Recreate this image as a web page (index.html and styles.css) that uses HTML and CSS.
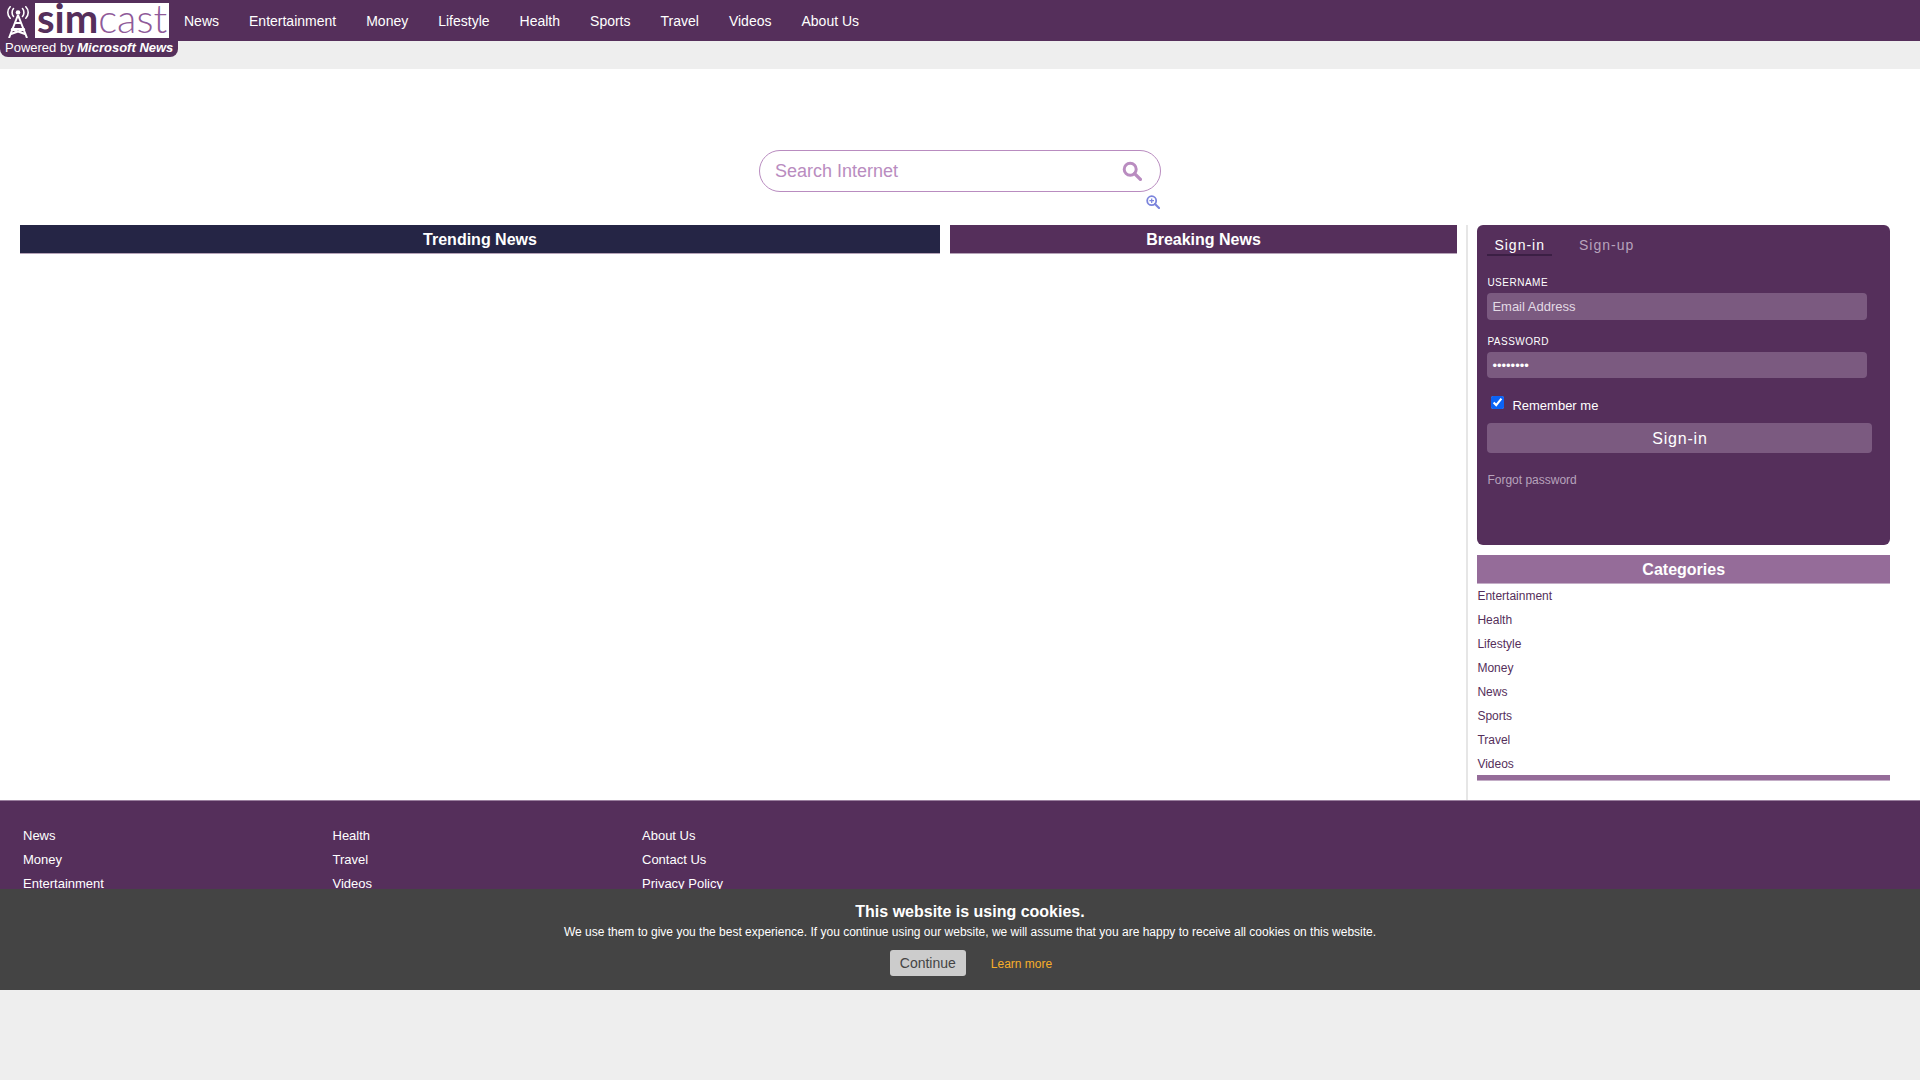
FILE: index.html
```html
<!DOCTYPE html>
<html lang="en">
<head>
    <meta charset="UTF-8">
    <meta name="viewport" content="width=device-width, initial-scale=1.0">
    <title>Simcast</title>
    <link rel="stylesheet" href="styles.css">
</head>
<body>
    <header class="topbar">
        <div class="logo">
            <div class="logo-main">
                <svg class="tower" viewBox="0 0 24 32" width="24" height="32">
                    <g fill="none" stroke="#fff" stroke-width="1.6" stroke-linecap="round">
                        <path d="M7.5 2.5C5.6 4.6 5.6 8.4 7.5 10.5"/>
                        <path d="M4.2 .8C1 4 1 9 4.2 12.2"/>
                        <path d="M16.5 2.5C18.4 4.6 18.4 8.4 16.5 10.5"/>
                        <path d="M19.8 .8C23 4 23 9 19.8 12.2"/>
                    </g>
                    <circle cx="12" cy="6.5" r="2.3" fill="#fff"/>
                    <path d="M12 9L3 32M12 9L21 32M9 17H15M6.8 23H17.2M5 28L19 23M19 28L5 23" fill="none" stroke="#fff" stroke-width="2"/>
                </svg>
                <div class="logo-box"><span class="logo-sim">sim</span><span class="logo-cast">cast</span></div>
            </div>
            <div class="logo-sub">Powered by <b>Microsoft News</b></div>
        </div>
        <nav class="nav">
            <a href="#">News</a>
            <a href="#">Entertainment</a>
            <a href="#">Money</a>
            <a href="#">Lifestyle</a>
            <a href="#">Health</a>
            <a href="#">Sports</a>
            <a href="#">Travel</a>
            <a href="#">Videos</a>
            <a href="#">About Us</a>
        </nav>
    </header>
    <div class="strip"></div>

    <main class="main">
        <div class="search-area">
            <div class="search">
                <input type="text" placeholder="Search Internet">
                <svg viewBox="0 0 20 20" width="20" height="20">
                    <circle cx="8.2" cy="8.2" r="6" fill="none" stroke="#b98cc0" stroke-width="3"/>
                    <path d="M12.6 12.6L18.4 18.4" stroke="#b98cc0" stroke-width="3.4" stroke-linecap="round"/>
                </svg>
            </div>
            <div class="search-zoom">
                <svg viewBox="0 0 14 14" width="14" height="14">
                    <circle cx="5.7" cy="5.7" r="4.5" fill="none" stroke="#7b84dc" stroke-width="1.8"/>
                    <path d="M9 9L13 13" stroke="#7b84dc" stroke-width="2.2" stroke-linecap="round"/>
                    <path d="M3.4 5.7H8M5.7 3.4V8" stroke="#7b84dc" stroke-width="1.2"/>
                </svg>
            </div>
        </div>

        <div class="columns">
            <section class="col-trending"><h2 class="title title-dark">Trending News</h2></section>
            <section class="col-breaking"><h2 class="title">Breaking News</h2></section>
            <aside class="sidebar">
                <div class="login">
                    <div class="tabs">
                        <a href="#" class="tab active">Sign-in</a>
                        <a href="#" class="tab">Sign-up</a>
                    </div>
                    <label class="field-label">USERNAME</label>
                    <input class="field" type="text" placeholder="Email Address">
                    <label class="field-label label-pass">PASSWORD</label>
                    <input class="field field-pass" type="password" value="password">
                    <label class="remember"><input type="checkbox" checked><span>Remember me</span></label>
                    <button class="signin">Sign-in</button>
                    <a href="#" class="forgot">Forgot password</a>
                </div>
                <h2 class="title title-light">Categories</h2>
                <ul class="cats">
                    <li><a href="#">Entertainment</a></li>
                    <li><a href="#">Health</a></li>
                    <li><a href="#">Lifestyle</a></li>
                    <li><a href="#">Money</a></li>
                    <li><a href="#">News</a></li>
                    <li><a href="#">Sports</a></li>
                    <li><a href="#">Travel</a></li>
                    <li><a href="#">Videos</a></li>
                </ul>
                <div class="cats-end"></div>
            </aside>
        </div>
    </main>

    <footer class="footer">
        <ul>
            <li><a href="#">News</a></li>
            <li><a href="#">Money</a></li>
            <li><a href="#">Entertainment</a></li>
        </ul>
        <ul>
            <li><a href="#">Health</a></li>
            <li><a href="#">Travel</a></li>
            <li><a href="#">Videos</a></li>
        </ul>
        <ul>
            <li><a href="#">About Us</a></li>
            <li><a href="#">Contact Us</a></li>
            <li><a href="#">Privacy Policy</a></li>
        </ul>
    </footer>

    <div class="cookie">
        <h3>This website is using cookies.</h3>
        <p>We use them to give you the best experience. If you continue using our website, we will assume that you are happy to receive all cookies on this website.</p>
        <div class="cookie-actions">
            <button>Continue</button>
            <a href="#">Learn more</a>
        </div>
    </div>
</body>
</html>
```

FILE: styles.css
```css
* {
    box-sizing: border-box;
}

body {
    font-family: "Liberation Sans", Arial, sans-serif;
    margin: 0;
    background-color: #eee;
}

a {
    text-decoration: none;
}

ul {
    list-style: none;
    margin: 0;
    padding: 0;
}

.topbar {
    display: flex;
    align-items: flex-start;
    height: 41px;
    background-color: #552f5b;
}

.logo {
    width: 178px;
    height: 57px;
    flex-shrink: 0;
    background-color: #552f5b;
    border-radius: 0 0 8px 8px;
}

.logo-main {
    display: flex;
    align-items: flex-end;
    height: 40px;
    padding: 3px 0 2px 6px;
}

.tower {
    flex-shrink: 0;
    margin-right: 5px;
}

.logo-box {
    width: 134px;
    height: 35px;
    background-color: #fff;
    font-family: Lato, sans-serif;
    font-size: 40px;
    line-height: 31px;
    padding-left: 2px;
    white-space: nowrap;
    overflow: hidden;
}

.logo-sim {
    color: #552f5b;
    font-weight: 700;
}

.logo-cast {
    color: #8f5a99;
    font-weight: 300;
}

.logo-sub {
    color: #fff;
    font-size: 13px;
    line-height: 15px;
    padding-left: 5px;
    white-space: nowrap;
}

.logo-sub b {
    font-style: italic;
}

.nav {
    display: flex;
    gap: 30px;
    margin-left: 6px;
    line-height: 42px;
}

.nav a {
    color: #fff;
    font-size: 14px;
}

.strip {
    height: 28px;
}

.main {
    height: 731px;
    padding: 81px 30px 0 20px;
    background-color: #fff;
}

.search-area {
    width: 402px;
    height: 75px;
    margin-left: 739px;
}

.search {
    display: flex;
    align-items: center;
    height: 42px;
    padding: 0 18px 0 15px;
    border: 1px solid #b98cc0;
    border-radius: 21px;
}

.search input {
    flex: 1;
    min-width: 0;
    border: none;
    outline: none;
    padding: 1px 0 0;
    font-family: inherit;
    font-size: 18px;
}

.search input::placeholder {
    color: #b98cc0;
    opacity: 1;
}

.search-zoom {
    display: flex;
    justify-content: flex-end;
    padding: 3px 1px 0 0;
}

.columns {
    display: flex;
    height: 575px;
}

.col-trending {
    width: 920px;
    margin-right: 10px;
}

.col-breaking {
    width: 507px;
    margin-right: 9px;
}

.title {
    margin: 0;
    height: 29px;
    line-height: 30px;
    font-size: 16px;
    text-align: center;
    color: #fff;
    background-color: #552f5b;
    border-bottom: 1px solid #b5a3b8;
}

.title-dark {
    background-color: #252545;
}

.title-light {
    background-color: #956c99;
    border-bottom-color: #c4aec7;
}

.sidebar {
    width: 424px;
    padding-left: 9.4px;
    border-left: 2px solid #e6e6e6;
}

.login {
    height: 320px;
    margin-bottom: 10px;
    padding: 10px;
    background-color: #552f5b;
    border-radius: 6px;
}

.tabs {
    display: flex;
    gap: 20px;
    height: 21px;
    margin-bottom: 21px;
}

.tab {
    padding: 0 7px;
    height: 21px;
    color: #b7a3bb;
    font-size: 14px;
    line-height: 20px;
    letter-spacing: 1px;
}

.tab.active {
    color: #fff;
    border-bottom: 2px solid #3b1f44;
}

.field-label {
    display: block;
    color: #fff;
    font-size: 10px;
    line-height: 12px;
    letter-spacing: 0.5px;
    margin-bottom: 4px;
}

.label-pass {
    margin-top: 16px;
}

.field {
    display: block;
    width: 380px;
    height: 27px;
    padding: 0 5px;
    border: none;
    outline: none;
    border-radius: 4px;
    background-color: #7b5a80;
    color: #fff;
    font-family: inherit;
    font-size: 13px;
}

.field::placeholder {
    color: #e3dbe5;
    opacity: 1;
}

.field-pass {
    height: 26px;
}

.remember {
    display: flex;
    align-items: center;
    height: 18px;
    margin-top: 17px;
    color: #fff;
    font-size: 13px;
}

.remember input {
    width: 13px;
    height: 13px;
    margin: 1px 8px 4px 4px;
    accent-color: #0b63f6;
}

.remember span {
    padding-top: 2px;
}

.signin {
    display: block;
    width: 385px;
    height: 30px;
    margin-top: 10px;
    padding: 1px 0 0;
    border: none;
    border-radius: 4px;
    background-color: #7b5a80;
    color: #fff;
    font-family: inherit;
    font-size: 16px;
    letter-spacing: 0.8px;
}

.forgot {
    display: block;
    margin-top: 20px;
    color: #b7a3bb;
    font-size: 12px;
}

.cats {
    margin-bottom: -1px;
}

.cats li {
    height: 24px;
    line-height: 24px;
    font-size: 12px;
}

.cats a {
    color: #552f5b;
}

.cats-end {
    position: relative;
    height: 6px;
    background-color: #956c99;
    border-bottom: 1px solid #c4aec7;
}

.footer {
    display: flex;
    height: 190px;
    padding: 23px 0 0 23px;
    background-color: #552f5b;
    border-top: 1px solid #9a7f9e;
}

.footer ul {
    width: 309.5px;
}

.footer li {
    height: 24px;
    line-height: 24px;
    font-size: 13px;
}

.footer a {
    color: #fff;
}

.cookie {
    position: fixed;
    left: 0;
    right: 0;
    bottom: 90px;
    height: 101px;
    padding: 13px 0 0 20px;
    background-color: #444;
    color: #fff;
    text-align: center;
}

.cookie h3 {
    margin: 0;
    font-size: 16px;
    line-height: 20px;
}

.cookie p {
    margin: 0;
    font-size: 12px;
    line-height: 20px;
}

.cookie-actions {
    display: flex;
    justify-content: center;
    align-items: center;
    gap: 25px;
    margin: 8px 0 0 2px;
}

.cookie-actions button {
    width: 76px;
    height: 26px;
    padding: 0;
    border: none;
    border-radius: 3px;
    background-color: #ccc;
    color: #444;
    font-family: inherit;
    font-size: 14px;
}

.cookie-actions a {
    color: #f7ae2a;
    font-size: 12px;
    padding-top: 1px;
}
```
